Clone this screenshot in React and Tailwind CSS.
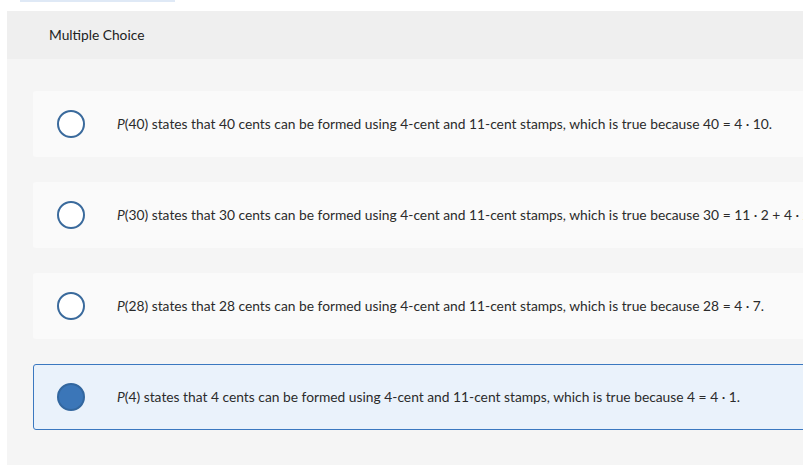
import React from "react";

const options = [
  { p: "40", rest: " states that 40 cents can be formed using 4-cent and 11-cent stamps, which is true because 40 = 4 · 10." },
  { p: "30", rest: " states that 30 cents can be formed using 4-cent and 11-cent stamps, which is true because 30 = 11 · 2 + 4 · 2." },
  { p: "28", rest: " states that 28 cents can be formed using 4-cent and 11-cent stamps, which is true because 28 = 4 · 7." },
  { p: "4", rest: " states that 4 cents can be formed using 4-cent and 11-cent stamps, which is true because 4 = 4 · 1.", selected: true },
];

export default function App() {
  return (
    <div className="w-[803px] h-[465px] overflow-hidden bg-white text-[#333]" style={{ fontFamily: "Lato, 'Open Sans', sans-serif" }}>
      <div className="h-[11px] pl-[20px]">
        <div className="w-[155px] h-[2px] bg-[#dfe9f6]" />
      </div>
      <div className="ml-[7px] w-[820px] bg-[#f5f5f5] h-[500px]">
        <div className="h-[48px] bg-[#efefef] flex items-center pl-[42px] text-[13.75px] text-[#222]">
          Multiple Choice
        </div>
        <div className="pl-[26px] pt-[32px] flex flex-col gap-[25px]">
          {options.map((o, i) => (
            <div
              key={i}
              className={
                o.selected
                  ? "h-[66px] rounded-[3px] border border-[#3b78c0] bg-[#eaf2fb] flex items-center pl-[23px] whitespace-nowrap"
                  : "h-[66px] rounded-[3px] border border-transparent bg-[#fafafa] flex items-center pl-[23px] whitespace-nowrap"
              }
            >
              {o.selected ? (
                <div className="w-[28px] h-[28px] rounded-full bg-[#3b76b8] border-2 border-[#33679f] shrink-0" />
              ) : (
                <div className="w-[28px] h-[28px] rounded-full bg-white border-2 border-[#3a6a9c] shrink-0" />
              )}
              <div className="ml-[32px] text-[13.8px] text-[#2b2b2b]">
                <i>P</i>({o.p}){o.rest}
              </div>
            </div>
          ))}
        </div>
      </div>
    </div>
  );
}
